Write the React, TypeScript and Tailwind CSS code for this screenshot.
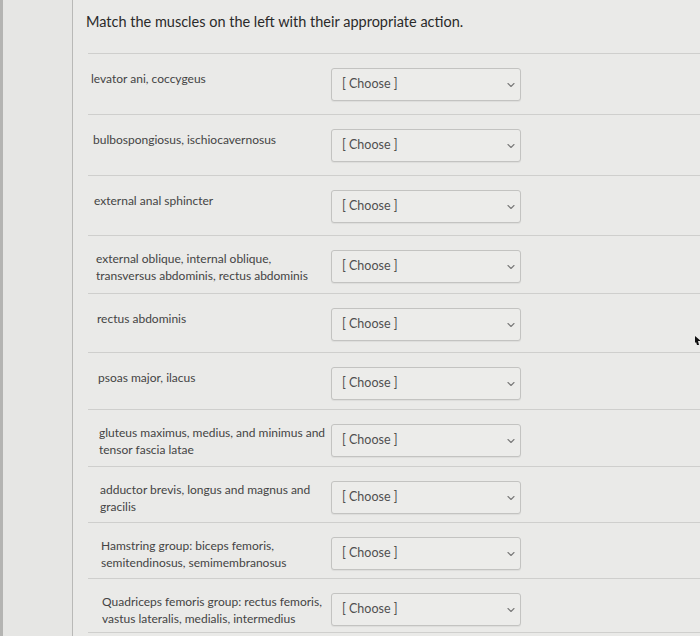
import { ChevronDown } from 'lucide-react';

const rows = [
  { label: ['levator ani, coccygeus'], h: 'h-[61px]', pl: 'pl-[3px]' },
  { label: ['bulbospongiosus, ischiocavernosus'], h: 'h-[61px]', pl: 'pl-[5px]' },
  { label: ['external anal sphincter'], h: 'h-[60px]', pl: 'pl-[6px]' },
  { label: ['external oblique, internal oblique,', 'transversus abdominis, rectus abdominis'], h: 'h-[58px]', pl: 'pl-[8px]' },
  { label: ['rectus abdominis'], h: 'h-[59px]', pl: 'pl-[9px]' },
  { label: ['psoas major, ilacus'], h: 'h-[57px]', pl: 'pl-[10px]' },
  { label: ['gluteus maximus, medius, and minimus and', 'tensor fascia latae'], h: 'h-[57px]', pl: 'pl-[11px]' },
  { label: ['adductor brevis, longus and magnus and', 'gracilis'], h: 'h-[56px]', pl: 'pl-[12px]' },
  { label: ['Hamstring group: biceps femoris,', 'semitendinosus, semimembranosus'], h: 'h-[56px]', pl: 'pl-[13px]' },
  { label: ['Quadriceps femoris group: rectus femoris,', 'vastus lateralis, medialis, intermedius'], h: 'h-[54px]', pl: 'pl-[14px]' },
];

export default function App() {
  return (
    <div className="relative w-[700px] h-[636px] overflow-hidden flex bg-[#eaeae8] font-['Lato','Noto_Sans',sans-serif]">
      {/* left strip of the page */}
      <div className="w-[73px] shrink-0 bg-[#e6e6e4] border-r border-[#b9b9b7] border-l-[3px] border-l-[#b4b4b2]" />

      <div className="flex-1">
        <div className="h-[53px] pl-[13px] pt-[11px] text-[14.5px] text-[#2a2a2a]">
          Match the muscles on the left with their appropriate action.
        </div>
        <div className="ml-[15px] border-t border-[#cfcfcd]" />

        {rows.map((row, i) => (
          <div key={i} className={`${row.h} ml-[15px] flex items-start pt-[14px] border-b border-[#cfcfcd]`}>
            <div
              className={`w-[243px] shrink-0 ${row.pl} ${row.label.length > 1 ? 'pt-0' : 'pt-[2px]'} text-[12px] leading-[17px] text-[#444] whitespace-nowrap`}
            >
              {row.label.map((line, j) => (
                <div key={j}>{line}</div>
              ))}
            </div>
            <div className="w-[190px] h-[33px] flex items-center justify-between pl-[10px] pr-[3px] bg-[#ececea] border border-[#c3c3c1] rounded-[3px] shadow-[0_1px_1px_rgba(0,0,0,0.06)]">
              <span className="text-[12.5px] text-[#505050]">[ Choose ]</span>
              <ChevronDown size={12} strokeWidth={2.25} className="text-[#7a7a7a]" />
            </div>
          </div>
        ))}
      </div>

      {/* mouse cursor peeking from the right edge */}
      <svg className="absolute left-[695px] top-[336px]" width="6" height="10" viewBox="0 0 6 10">
        <path d="M0 0 L6 5 L3 5 L4 9 L2 9 L1 6 L0 7 Z" fill="#111" />
      </svg>
    </div>
  );
}
